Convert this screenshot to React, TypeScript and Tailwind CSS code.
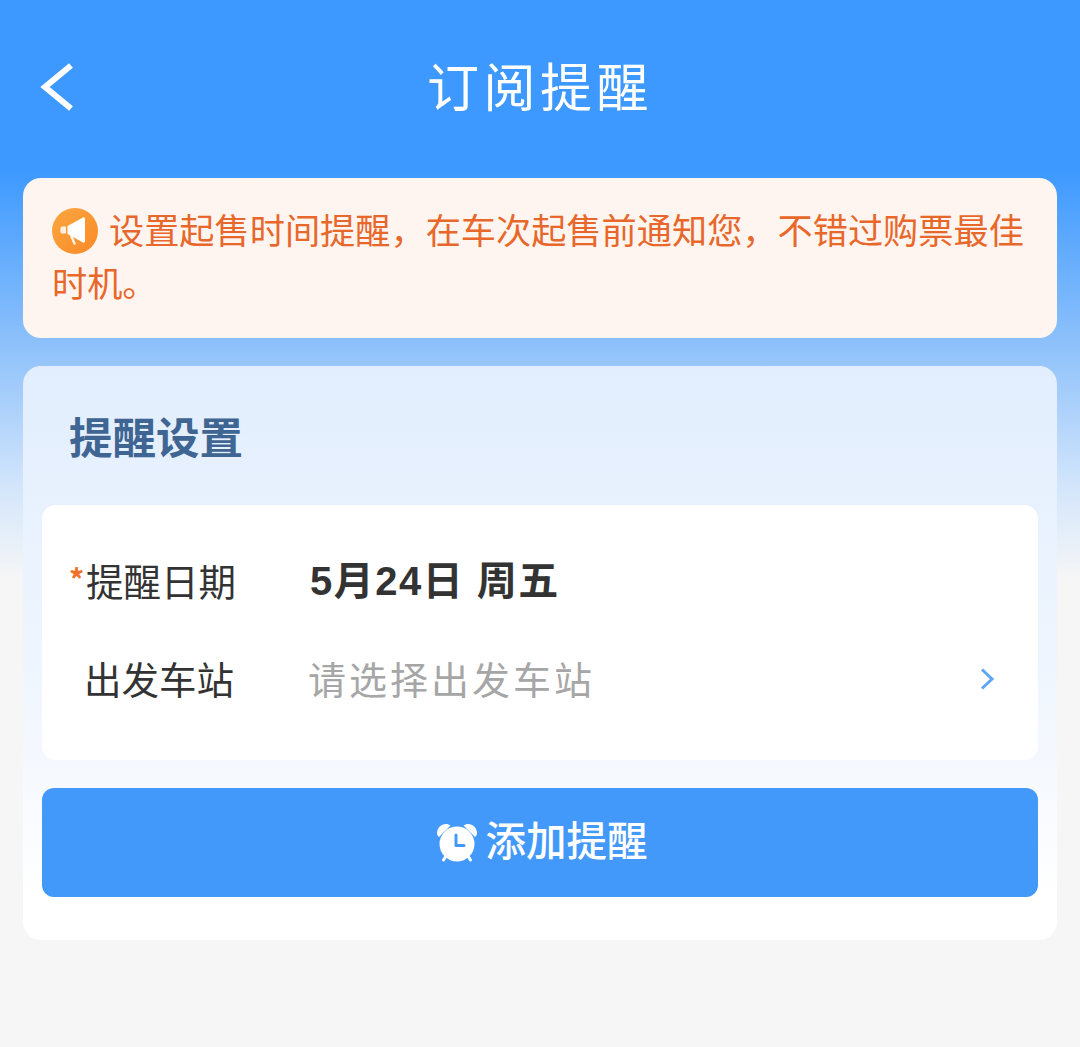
const cjk = "font-['Noto_Sans_CJK_SC','Noto_Sans',sans-serif]";

function Horn() {
  return (
    <svg viewBox="0 0 46 46" className="w-[46px] h-[46px] shrink-0 mr-[11px]">
      <defs>
        <linearGradient id="horn" x1="0" y1="0" x2="1" y2="1">
          <stop offset="0" stopColor="#fba640" />
          <stop offset="1" stopColor="#f98a28" />
        </linearGradient>
      </defs>
      <circle cx="23" cy="23" r="23" fill="url(#horn)" />
      <path d="M10 18.500h4v7h-4a1.500 1.500 0 0 1-1.500-1.500v-4a1.500 1.500 0 0 1 1.500-1.500z" fill="#fff" opacity="0.85" />
      <path d="M15.500 18L31 9.500c1-.5 2 .2 2 1.300v22.400c0 1.100-1 1.800-2 1.300l-15.500-8.500z" fill="#fff" />
      <path d="M19.500 28.500l3 7" stroke="#fff" strokeWidth="2.500" strokeLinecap="round" opacity="0.85" />
    </svg>
  );
}

function Alarm() {
  return (
    <svg viewBox="0 0 42 42" className="w-[42px] h-[42px] mr-[8px] ml-[3px]">
      <circle cx="21" cy="22" r="17.500" fill="#fff" />
      <path d="M1 11.500C1 6 5 2 10 2c1.700 0 3.300.6 4.500 1.500L3 15C1.800 14 1 12.800 1 11.500z" fill="#fff" />
      <path d="M41 11.500C41 6 37 2 32 2c-1.700 0-3.300.6-4.500 1.500L39 15c1.200-1 2-2.200 2-3.500z" fill="#fff" />
      <path d="M10 34l-2.500 4M32 34l2.500 4" stroke="#fff" strokeWidth="3" strokeLinecap="round" />
      <path d="M20 13v10.500h8" fill="none" stroke="#4399f9" strokeWidth="3" strokeLinecap="round" strokeLinejoin="round" />
    </svg>
  );
}

export default function App() {
  return (
    <div className={`${cjk} w-[1080px] h-[1047px] overflow-hidden bg-[linear-gradient(180deg,#3d99ff_0px,#3d99ff_170px,#8ec1fb_345px,#d4e6fb_490px,#f6f6f6_580px,#f6f6f6_100%)]`}>
      <header className="h-[178px] pb-[8px] flex items-center relative">
        <svg viewBox="0 0 36 50" className="absolute left-[40px] top-[62px] w-[36px] h-[50px]">
          <path d="M31 3.500L5 25l26 21.500" fill="none" stroke="#fff" strokeWidth="6" />
        </svg>
        <h1 className="w-full text-center text-white text-[52px] leading-[70px] tracking-[4.500px]">订阅提醒</h1>
      </header>

      <div className="mx-[23px] h-[160px] rounded-[18px] bg-[#fff5f0] px-[29px] pt-[24px] text-[#e8672a] text-[35.200px] leading-[53px]">
        <p>
          <span className="inline-flex align-[-10px]"><Horn /></span>
          设置起售时间提醒，在车次起售前通知您，不错过购票最佳时机。
        </p>
      </div>

      <section className="mx-[23px] mt-[28px] h-[574px] rounded-[18px] bg-[linear-gradient(180deg,#e2eefe_0%,#eef5fe_50%,#f6f9fe_72%,#ffffff_92%)] px-[19px]">
        <h2 className="pl-[27px] pt-[39px] h-[139px] text-[#3f6593] text-[43.500px] leading-[62px] font-bold">提醒设置</h2>

        <div className="h-[255px] rounded-[14px] bg-white pl-[27px] pr-[43px] pt-[46px]">
          <div className="flex items-center h-[58px]">
            <div className="relative w-[241px] pl-[17px] text-[#333333] text-[37.500px] leading-[58px]">
              <span className="absolute left-0 top-[-2px] text-[#f0702a] text-[30px] font-bold">*</span>
              提醒日期
            </div>
            <div className="font-['Liberation_Sans','Noto_Sans_CJK_SC',sans-serif] text-[#333333] text-[40px] font-bold tracking-[1.500px] pt-[2px]">5月24日 周五</div>
          </div>
          <div className="flex items-center h-[58px] mt-[40px]">
            <div className="w-[241px] pl-[15px] text-[#333333] text-[37.500px] leading-[58px]">出发车站</div>
            <div className="flex-1 -ml-[2px] text-[#a6a6a6] text-[38px] tracking-[3px] -mt-[2px]">请选择出发车站</div>
            <svg viewBox="0 0 16 24" className="w-[16px] h-[24px] mt-[2px]">
              <path d="M3 2.500L13 12 3 21.500" fill="none" stroke="#5ea6f5" strokeWidth="3" />
            </svg>
          </div>
        </div>

        <button className="mt-[28px] w-full h-[109px] rounded-[12px] bg-[#4399f9] text-white flex items-center justify-center text-[40.500px] leading-[50px] font-medium">
          <Alarm />
          <span className="-mt-[8px]">添加提醒</span>
        </button>
      </section>
    </div>
  );
}
